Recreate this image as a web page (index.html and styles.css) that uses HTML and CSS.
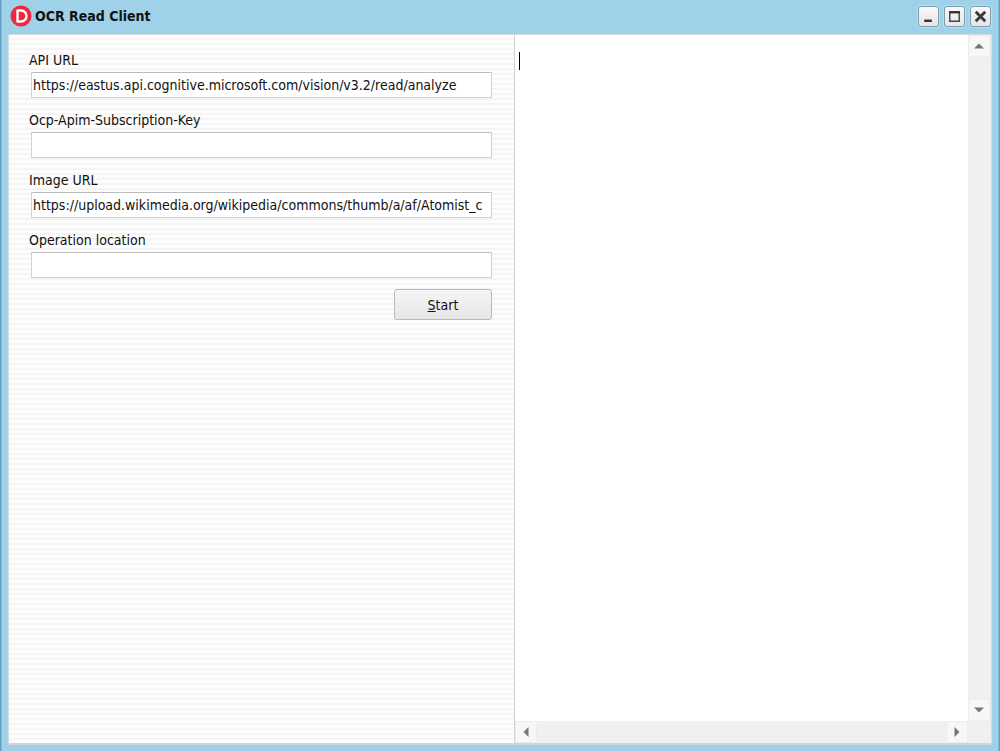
FILE: index.html
```html
<!DOCTYPE html>
<html lang="en">
<head>
<meta charset="utf-8">
<title>OCR Read Client</title>
<link rel="stylesheet" href="styles.css">
</head>
<body>
<div class="window">
  <header class="titlebar">
    <svg class="logo" viewBox="0 0 22 22" aria-hidden="true">
      <circle cx="11" cy="11" r="10.500" fill="#f0283c"/>
      <path d="M7.500 5.500H11A5.500 5.500 0 0 1 11 16.500H7.500Z" fill="none" stroke="#fff" stroke-width="2.400" stroke-linejoin="round"/>
    </svg>
    <h1 class="title">OCR Read Client</h1>
    <div class="controls">
      <button class="control" type="button" aria-label="Minimize"><svg viewBox="0 0 20 20"><path d="M5.500 14.500H13.500" stroke="#333" stroke-width="2.600"/></svg></button>
      <button class="control" type="button" aria-label="Maximize"><svg viewBox="0 0 20 20"><path d="M5 5.500H15V15H5Z" fill="none" stroke="#444" stroke-width="1.500"/><path d="M4.250 5.500H15.750" stroke="#333" stroke-width="2.500"/></svg></button>
      <button class="control" type="button" aria-label="Close"><svg viewBox="0 0 20 20"><path d="M5 5L15 15M15 5L5 15" stroke="#3a3a3a" stroke-width="3"/></svg></button>
    </div>
  </header>
  <main class="client">
    <form class="panel">
      <div class="field">
        <label class="label" for="api">API URL</label>
        <input class="input" id="api" type="text" value="https://eastus.api.cognitive.microsoft.com/vision/v3.2/read/analyze">
      </div>
      <div class="field">
        <label class="label" for="key">Ocp-Apim-Subscription-Key</label>
        <input class="input" id="key" type="text">
      </div>
      <div class="field">
        <label class="label" for="image">Image URL</label>
        <input class="input" id="image" type="text" value="https://upload.wikimedia.org/wikipedia/commons/thumb/a/af/Atomist_c">
      </div>
      <div class="field">
        <label class="label" for="operation">Operation location</label>
        <input class="input" id="operation" type="text">
      </div>
      <button class="start" type="button"><u>S</u>tart</button>
    </form>
    <section class="output">
      <div class="editor">
        <textarea class="memo" aria-label="Result"></textarea>
        <span class="caret"></span>
      </div>
      <div class="scroll vertical">
        <button class="arrow" type="button" aria-label="Scroll up"><svg viewBox="0 0 10 10"><path d="M0 7.500L5 2.500L10 7.500Z"/></svg></button>
        <button class="arrow" type="button" aria-label="Scroll down"><svg viewBox="0 0 10 10"><path d="M0 2.500L5 7.500L10 2.500Z"/></svg></button>
      </div>
      <div class="scroll horizontal">
        <button class="arrow" type="button" aria-label="Scroll left"><svg viewBox="0 0 10 10"><path d="M7.500 0L2.500 5L7.500 10Z"/></svg></button>
        <button class="arrow" type="button" aria-label="Scroll right"><svg viewBox="0 0 10 10"><path d="M2.500 0L7.500 5L2.500 10Z"/></svg></button>
      </div>
    </section>
  </main>
</div>
</body>
</html>
```
FILE: styles.css
```css
* {
  box-sizing: border-box;
}

body {
  margin: 0;
  font-family: "DejaVu Sans Condensed", "DejaVu Sans", sans-serif;
  font-size: 14px;
  color: #111;
}

.window {
  display: flex;
  flex-direction: column;
  height: 100vh;
  padding: 0 7px 6px;
  background: #9fd1e8;
  border: solid #5f9dbe;
  border-width: 0 1px;
  box-shadow: inset 1px 0 #85bdd9, inset -1px 0 #85bdd9;
}

.titlebar {
  display: flex;
  align-items: center;
  gap: 3px;
  height: 34px;
  padding: 0 1px 2px 2px;
}

.logo {
  width: 22px;
  height: 22px;
}

.title {
  flex: 1;
  margin: 0;
  font-size: 14px;
  font-weight: bold;
}

.controls {
  display: flex;
  gap: 5px;
}

.control {
  display: flex;
  width: 21px;
  height: 21px;
  padding: 0;
  border: 1px solid #7d9dae;
  border-radius: 3px;
  background: linear-gradient(#f9f9f9, #e5e5e5);
  box-shadow: 0 0 0 1px #b9e0f1;
}

.control svg {
  width: 19px;
  height: 19px;
}

.client {
  flex: 1;
  display: grid;
  grid-template-columns: 506fr 476fr;
  min-height: 0;
  border: 1px solid #d5dcdf;
  border-bottom: 2px solid #d0d5d7;
}

.panel {
  display: flex;
  flex-direction: column;
  gap: 11px;
  padding: 14px 22px 0 20px;
  border-right: 1px solid #d2d2d2;
  background: repeating-linear-gradient(#fdfdfd 0 3px, #f5f5f5 3px 5px);
}

.field {
  display: flex;
  flex-direction: column;
}

.label {
  height: 23px;
  line-height: 22px;
}

.input {
  height: 26px;
  margin-left: 2px;
  padding: 0 1px;
  border: 1px solid #d2d2d2;
  border-top-color: #bdbdbd;
  background: #fff;
  color: #111;
  font: inherit;
}

.start {
  align-self: flex-end;
  width: 98px;
  height: 31px;
  border: 1px solid #b9b9b9;
  border-radius: 3px;
  background: linear-gradient(#f6f6f6, #e6e6e6);
  color: #111;
  font: inherit;
}

.output {
  display: grid;
  grid-template: 1fr 22px / 1fr 23px;
  min-height: 0;
  background: #f0f0f0;
}

.editor {
  position: relative;
  display: flex;
}

.memo {
  flex: 1;
  padding: 16px 4px;
  border: 0;
  outline: 0;
  resize: none;
  overflow: hidden;
  background: #fff;
  font: inherit;
}

.caret {
  position: absolute;
  left: 4px;
  top: 17px;
  width: 1px;
  height: 18px;
  background: #000;
}

.scroll {
  display: flex;
  justify-content: space-between;
}

.vertical {
  flex-direction: column;
}

.arrow {
  display: grid;
  place-items: center;
  width: 22px;
  height: 22px;
  padding: 0;
  border: 1px solid #ececec;
  background: #f7f7f7;
}

.arrow svg {
  width: 10px;
  height: 10px;
  fill: #777;
}
```
